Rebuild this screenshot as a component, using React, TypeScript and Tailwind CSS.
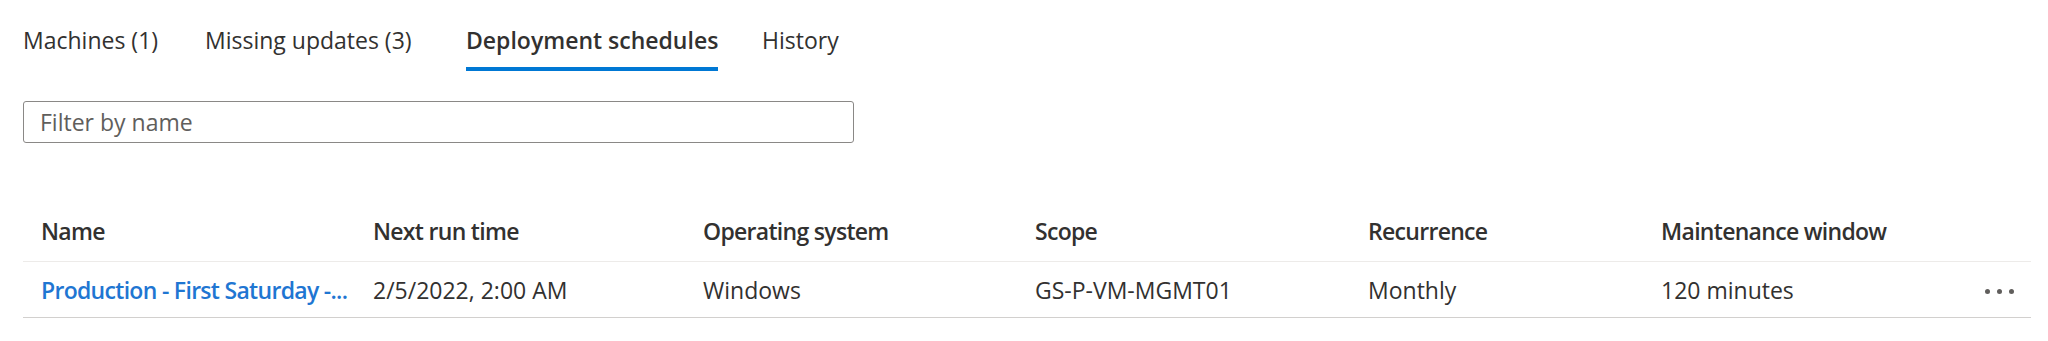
import React from "react";

const font = { fontFamily: '"Segoe UI", "Open Sans", "Noto Sans", sans-serif' };

function Tab({ label, active, w }: { label: string; active?: boolean; w: string }) {
  return (
    <div className={`${w} shrink-0 flex flex-col items-start`}>
      <div className="flex flex-col items-stretch">
        <span
          className={`leading-[32px] text-[23px] text-[#323130] whitespace-nowrap ${
            active ? "font-semibold" : "font-normal"
          }`}
        >
          {label}
        </span>
        <div className={`mt-[11px] h-[4px] ${active ? "bg-[#0078d4]" : "bg-transparent"}`} />
      </div>
    </div>
  );
}

const headers = [
  "Name",
  "Next run time",
  "Operating system",
  "Scope",
  "Recurrence",
  "Maintenance window",
];

export default function App() {
  return (
    <div className="w-[2048px] h-[341px] bg-white overflow-hidden" style={font}>
      <div className="pl-[23px] pt-[24px] flex">
        <Tab label="Machines (1)" w="w-[182px]" />
        <Tab label="Missing updates (3)" w="w-[261px]" />
        <Tab label="Deployment schedules" w="w-[296px]" active />
        <Tab label="History" w="w-[120px]" />
      </div>

      <div className="pl-[23px] mt-[30px]">
        <div className="w-[831px] h-[42px] border border-[#8a8886] rounded-[3px] flex items-center pl-[16px]">
          <input
            className="w-full h-full bg-transparent outline-none text-[23px] text-[#323130] placeholder:text-[#605e5c]"
            placeholder="Filter by name"
            style={font}
          />
        </div>
      </div>

      <div className="ml-[23px] w-[2008px] mt-[72px] text-[23px] text-[#323130]">
        <div className="grid grid-cols-[332px_330px_332px_333px_293px_1fr_64px] border-b border-[#edebe9] pb-[14px]">
          {headers.map((h) => (
            <div
              key={h}
              className="pl-[18px] font-semibold tracking-[-0.7px] leading-[32px] whitespace-nowrap"
            >
              {h}
            </div>
          ))}
          <div />
        </div>
        <div className="grid grid-cols-[332px_330px_332px_333px_293px_1fr_64px] h-[56px] items-center border-b border-[#d2d0ce] leading-[32px]">
          <div className="pl-[18px] whitespace-nowrap overflow-hidden">
            <a className="text-[#1f76d2] font-semibold tracking-[-0.7px] cursor-pointer">
              Production - First Saturday -...
            </a>
          </div>
          <div className="pl-[18px] whitespace-nowrap">2/5/2022, 2:00 AM</div>
          <div className="pl-[18px] whitespace-nowrap">Windows</div>
          <div className="pl-[18px] whitespace-nowrap">GS-P-VM-MGMT01</div>
          <div className="pl-[18px] whitespace-nowrap">Monthly</div>
          <div className="pl-[18px] whitespace-nowrap">120 minutes</div>
          <div className="pl-[18px] flex items-center gap-[7px] pt-[4px]">
            <span className="w-[5px] h-[5px] rounded-full bg-[#605e5c]" />
            <span className="w-[5px] h-[5px] rounded-full bg-[#605e5c]" />
            <span className="w-[5px] h-[5px] rounded-full bg-[#605e5c]" />
          </div>
        </div>
      </div>
    </div>
  );
}
